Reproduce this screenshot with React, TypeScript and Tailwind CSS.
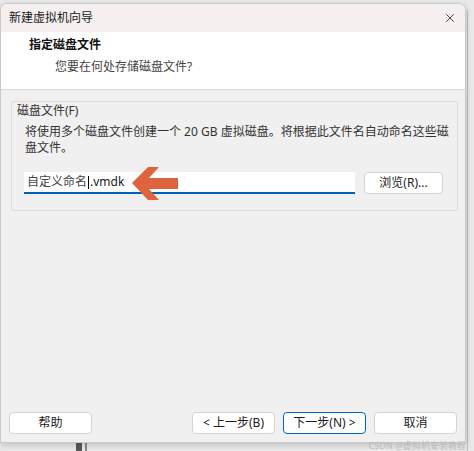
import React from 'react';
import { X } from 'lucide-react';

const font = { fontFamily: '"Noto Sans", "Noto Sans CJK SC", sans-serif' };

const FooterButton: React.FC<{ label: string; primary?: boolean; className?: string }> = ({
  label,
  primary,
  className = '',
}) => (
  <button
    className={`h-[22px] w-[83px] rounded-[4px] bg-white text-[12px] leading-none text-[#1a1a1a] ${
      primary ? 'border border-[#0067c0]' : 'border border-[#d4d4d4]'
    } ${className}`}
  >
    {label}
  </button>
);

// Hand-drawn callout arrow pointing at the file name field
const CalloutArrow: React.FC = () => (
  <svg width="47" height="36" viewBox="0 0 47 36" className="absolute left-[108px] top-[-6px]">
    <polygon
      points="0,17 16,1 27,1 17,12 46,12 46,23 17,23 27,34 16,34"
      fill="#de6440"
    />
  </svg>
);

const App: React.FC = () => {
  return (
    <div className="relative h-[451px] w-[474px] overflow-hidden bg-[#e9e9e9] pt-[3px]" style={font}>
      {/* window behind the dialog */}
      <div className="absolute right-[6px] top-[10px] h-[441px] w-px bg-[#bdbdbd]" />

      <div className="relative flex h-[440px] w-[466px] flex-col overflow-hidden rounded-t-[7px] border border-[#c9c9c9] bg-[#f0f0f0] shadow-[0_2px_6px_rgba(0,0,0,0.18)]">
        {/* title bar */}
        <div className="flex h-[28px] items-center justify-between bg-[#f5efef] pl-[8px] pr-[8px]">
          <span className="text-[12px] text-[#1a1a1a]">新建虚拟机向导</span>
          <X className="h-[14px] w-[14px] text-[#333]" strokeWidth={1.5} />
        </div>

        {/* page header */}
        <div className="h-[58px] border-b border-[#d9d9d9] bg-white pt-[5px]">
          <div className="pl-[28px] text-[12px] font-bold leading-[16px] text-[#111]">指定磁盘文件</div>
          <div className="mt-[6px] pl-[54px] text-[12px] leading-[16px] text-[#444]">您要在何处存储磁盘文件?</div>
        </div>

        {/* body */}
        <div className="flex flex-1 flex-col">
          <div className="ml-[10px] mt-[11px] w-[447px] rounded-[3px] border border-[#dcdcdc] pb-[16px] pt-[1px]">
            <div className="pl-[5px] text-[12px] leading-[16px] text-[#333]">磁盘文件(F)</div>
            <p className="mt-[5px] pl-[13px] pr-[8px] text-[12px] leading-[16px] text-[#333]">
              将使用多个磁盘文件创建一个 20 GB 虚拟磁盘。将根据此文件名自动命名这些磁盘文件。
            </p>
            <div className="mt-[16px] flex items-center pl-[12px]">
              <div className="relative flex h-[22px] w-[331px] items-center border-b-2 border-[#005fb8] bg-white pl-[3px] text-[12px] text-[#222]">
                <span className="text-[#444]">自定义命名</span>
                <span className="mx-px h-[13px] w-px bg-black" />
                <span>.vmdk</span>
                <CalloutArrow />
              </div>
              <button className="ml-[9px] h-[22px] w-[79px] rounded-[4px] border border-[#d4d4d4] bg-white text-[12px] leading-none text-[#222]">
                浏览(R)...
              </button>
            </div>
          </div>

          {/* footer buttons */}
          <div className="mt-auto flex items-center pb-[8px] pl-[8px]">
            <FooterButton label="帮助" />
            <FooterButton label="< 上一步(B)" className="ml-[100px]" />
            <FooterButton label="下一步(N) >" primary className="ml-[8px]" />
            <FooterButton label="取消" className="ml-[8px]" />
          </div>
        </div>
      </div>

      {/* taskbar bits below the dialog */}
      <div className="flex h-[8px] items-start pl-[76px]">
        <div className="h-[8px] w-[6px] bg-[#5a5a5a]" />
        <div className="ml-[3px] h-[8px] w-[2px] bg-[#8a8a8a]" />
      </div>

      {/* watermark */}
      <div className="absolute bottom-[1px] right-[8px] text-[9px] leading-none text-[#b5b5b5] opacity-80">
        CSDN @虚拟机安装教程
      </div>
    </div>
  );
};

export default App;
